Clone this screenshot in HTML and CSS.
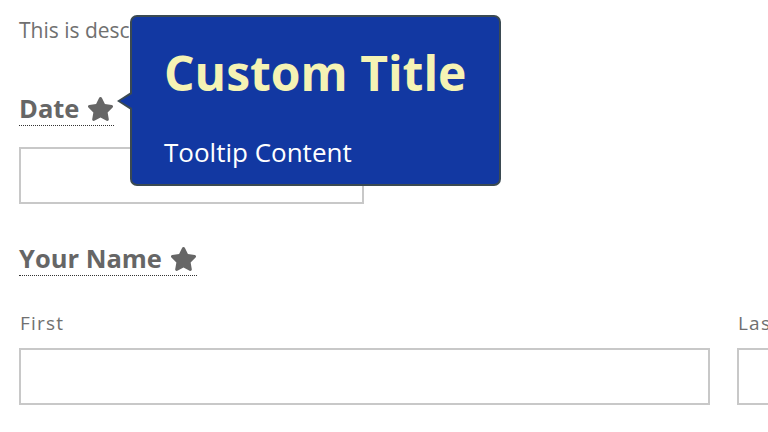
FILE: index.html
```html
<!DOCTYPE html>
<html>
<head>
<meta charset="utf-8">
<link rel="stylesheet" href="styles.css">
</head>
<body>
<div class="form">
  <p class="desc">This is description text for the form</p>
  <div class="field">
    <span class="label">Date <svg class="star" viewBox="0 0 576 512"><path d="M259.3 17.8L194 150.2 47.9 171.5c-26.2 3.8-36.7 36.1-17.7 54.6l105.7 103-25 145.5c-4.5 26.3 23.2 46 46.4 33.7L288 439.6l130.7 68.7c23.2 12.2 50.9-7.4 46.4-33.7l-25-145.5 105.7-103c19-18.5 8.5-50.8-17.7-54.6L382 150.2 316.7 17.8c-11.7-23.6-45.6-23.9-57.4 0z"/></svg></span>
    <div class="input date-input"></div>
  </div>
  <div class="field name-field">
    <span class="label">Your Name <svg class="star" viewBox="0 0 576 512"><path d="M259.3 17.8L194 150.2 47.9 171.5c-26.2 3.8-36.7 36.1-17.7 54.6l105.7 103-25 145.5c-4.5 26.3 23.2 46 46.4 33.7L288 439.6l130.7 68.7c23.2 12.2 50.9-7.4 46.4-33.7l-25-145.5 105.7-103c19-18.5 8.5-50.8-17.7-54.6L382 150.2 316.7 17.8c-11.7-23.6-45.6-23.9-57.4 0z"/></svg></span>
    <div class="name-row">
      <div class="sub">
        <span class="sublabel">First</span>
        <div class="input"></div>
      </div>
      <div class="sub">
        <span class="sublabel">Last</span>
        <div class="input"></div>
      </div>
    </div>
  </div>
</div>
<div class="tooltip">
  <div class="tt-title">Custom Title</div>
  <div class="tt-body">Tooltip Content</div>
</div>
</body>
</html>
```
FILE: styles.css
```css
html, body {
  margin: 0;
  padding: 0;
  background: #ffffff;
  overflow: hidden;
  width: 768px;
  height: 432px;
}
body {
  font-family: "Open Sans", "Noto Sans", sans-serif;
  position: relative;
}
.form {
  padding: 16px 0 0 19px;
  display: flex;
  flex-direction: column;
}
.desc {
  margin: 0;
  font-size: 21px;
  line-height: 28px;
  color: #707070;
  white-space: nowrap;
}
.field {
  display: flex;
  flex-direction: column;
  align-items: flex-start;
}
.label {
  margin-top: 48px;
  font-size: 25.5px;
  line-height: 32px;
  font-weight: 700;
  color: #666666;
  border-bottom: 1.5px dotted #333;
  padding-bottom: 1px;
  display: inline-flex;
  align-items: center;
  gap: 8px;
}
.star {
  width: 27px;
  height: 24px;
  fill: #666666;
  margin-top: 1px;
}
.input {
  box-sizing: border-box;
  border: 2px solid #c8c8c8;
  height: 57px;
  background: #fff;
}
.date-input {
  margin-top: 21px;
  width: 345px;
}
.name-field .label {
  margin-top: 38px;
}
.name-row {
  margin-top: 34px;
  display: grid;
  grid-template-columns: 691px 200px;
  column-gap: 27px;
}
.sub {
  display: flex;
  flex-direction: column;
  overflow: hidden;
}
.sublabel {
  font-size: 19px;
  line-height: 26px;
  font-weight: 400;
  color: #707070;
  letter-spacing: 1.2px;
  margin-bottom: 12px;
  padding-left: 1px;
}
.tooltip {
  position: absolute;
  left: 130px;
  top: 15px;
  width: 371px;
  height: 171px;
  box-sizing: border-box;
  background: #1238a2;
  border: 2px solid #3b4a52;
  border-radius: 7px;
  padding: 24px 0 0 32px;
}
.tooltip::before {
  content: "";
  position: absolute;
  left: -15px;
  top: 75px;
  border-style: solid;
  border-width: 9px 14px 9px 0;
  border-color: transparent #3b4a52 transparent transparent;
}
.tooltip::after {
  content: "";
  position: absolute;
  left: -12px;
  top: 77px;
  border-style: solid;
  border-width: 7px 12px 7px 0;
  border-color: transparent #1238a2 transparent transparent;
}
.tt-title {
  font-size: 48px;
  line-height: 64px;
  font-weight: 700;
  color: #f5f3b4;
  white-space: nowrap;
}
.tt-body {
  margin-top: 30px;
  font-size: 26px;
  line-height: 34px;
  color: #ffffff;
}
```
